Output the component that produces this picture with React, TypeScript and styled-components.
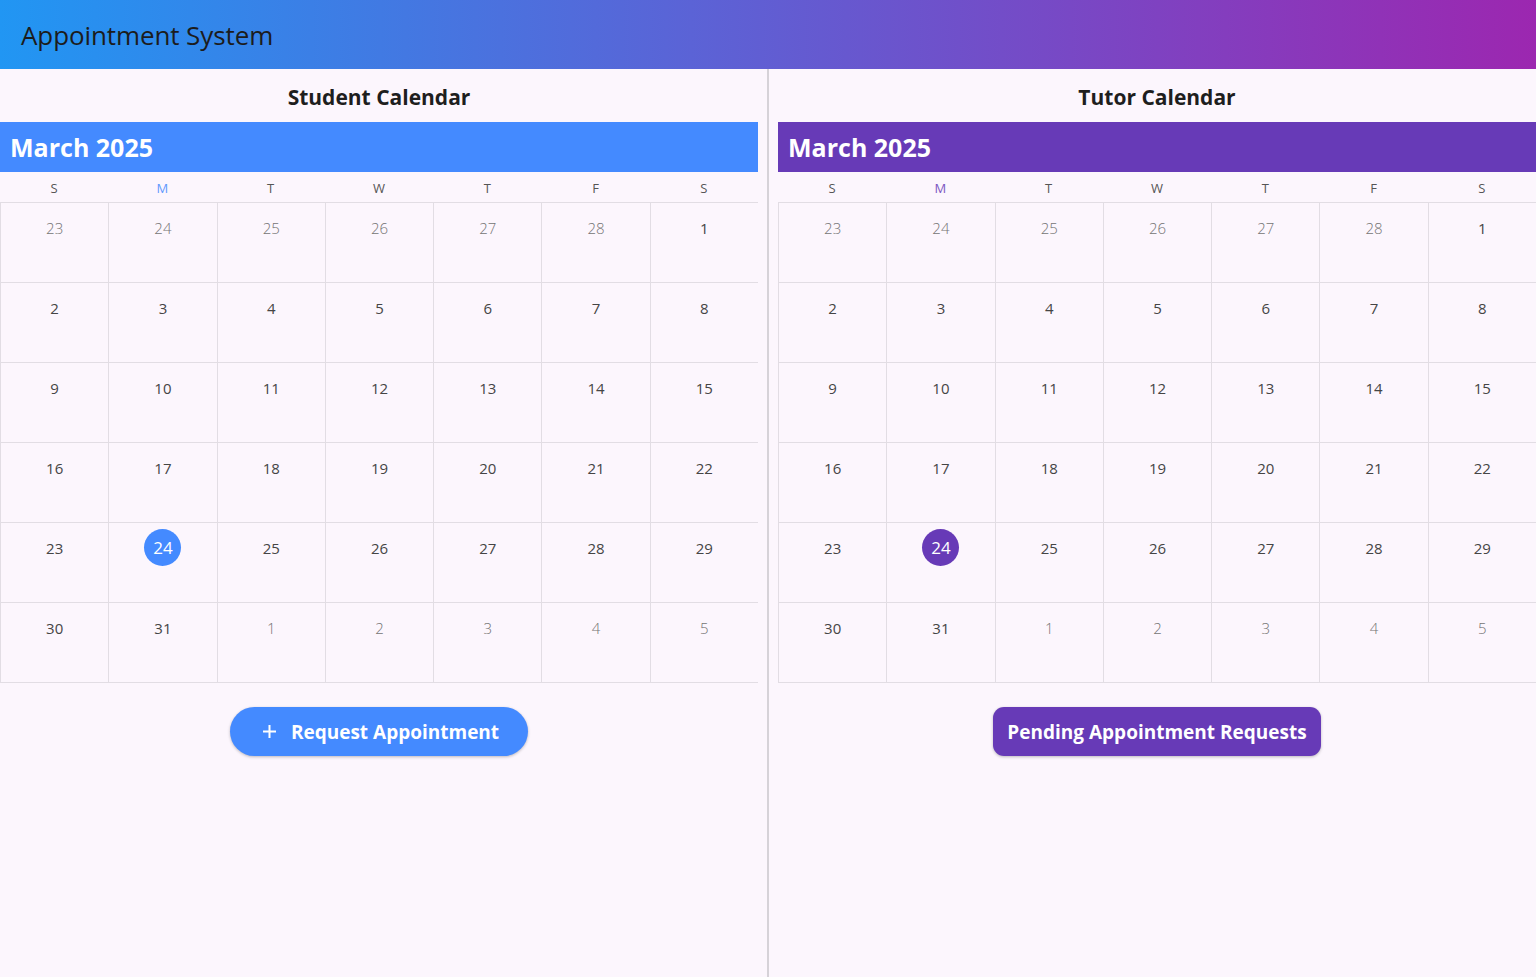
import React from 'react'
import styled, { createGlobalStyle } from 'styled-components'

const GlobalStyle = createGlobalStyle`
  html, body {
    margin: 0;
    padding: 0;
    background: #fcf6fd;
    font-family: "Open Sans", "Noto Sans", sans-serif;
  }
`

const Page = styled.div`
  display: flex;
  flex-direction: column;
  height: 977px;
  overflow: hidden;
`

const TopBar = styled.header`
  height: 69px;
  flex: none;
  display: flex;
  align-items: center;
  padding-left: 21px;
  background: linear-gradient(90deg, #2196f3 0%, #5b63d6 45%, #9c27b0 100%);
`

const AppTitle = styled.h1`
  margin: 0;
  font-size: 26px;
  font-weight: 400;
  color: #1c1c1c;
  letter-spacing: -0.1px;
`

const Columns = styled.main`
  flex: 1;
  display: grid;
  grid-template-columns: 767px 2px 767px;
`

const Divider = styled.div`
  background: #d6d2d8;
`

const Panel = styled.section<{ $side: 'left' | 'right' }>`
  display: flex;
  flex-direction: column;
  padding: ${p => (p.$side === 'left' ? '0 9px 0 0' : '0 0 0 9px')};
`

const PanelTitle = styled.h2`
  margin: 0;
  height: 53px;
  padding-top: 2px;
  box-sizing: border-box;
  display: flex;
  align-items: center;
  justify-content: center;
  font-size: 21px;
  font-weight: 700;
  color: #1e1e1e;
`

const MonthBar = styled.div<{ $accent: string }>`
  height: 50px;
  display: flex;
  align-items: center;
  padding-left: 10px;
  background: ${p => p.$accent};
  color: #fff;
  font-size: 25px;
  font-weight: 700;
`

const WeekRow = styled.div`
  display: grid;
  grid-template-columns: repeat(7, 1fr);
  height: 31px;
  box-sizing: border-box;
  border-bottom: 1px solid #e2dde4;
`

const WeekDay = styled.div<{ $accent?: string }>`
  display: flex;
  align-items: center;
  justify-content: center;
  padding-top: 2px;
  font-size: 13px;
  color: ${p => p.$accent ?? '#555'};
  opacity: ${p => (p.$accent ? 0.85 : 1)};
`

const DayGrid = styled.div`
  display: grid;
  grid-template-columns: repeat(7, 1fr);
  grid-auto-rows: 80px;
`

const DayCell = styled.div`
  display: flex;
  justify-content: center;
  padding-top: 6px;
  border-left: 1px solid #e2dde4;
  border-bottom: 1px solid #e2dde4;
  box-sizing: border-box;
`

const DayNumber = styled.span<{ $muted: boolean; $today?: string }>`
  width: 37px;
  height: 37px;
  border-radius: 50%;
  display: flex;
  align-items: center;
  justify-content: center;
  font-size: ${p => (p.$today ? '17px' : '15px')};
  font-weight: ${p => (p.$muted ? 300 : 400)};
  color: ${p => (p.$today ? '#fff' : p.$muted ? '#747474' : '#454545')};
  background: ${p => p.$today ?? 'transparent'};
`

const Actions = styled.div`
  display: flex;
  justify-content: center;
  padding-top: 24px;
`

const ActionButton = styled.button<{ $accent: string; $pill?: boolean }>`
  height: 49px;
  display: flex;
  align-items: center;
  gap: 14px;
  padding: ${p => (p.$pill ? '0 29px 0 32px' : '0 14px')};
  border: none;
  border-radius: ${p => (p.$pill ? '25px' : '11px')};
  background: ${p => p.$accent};
  color: #fff;
  font-family: inherit;
  font-size: 19px;
  font-weight: 700;
  box-shadow: 0 1px 3px rgba(0, 0, 0, 0.25);
  cursor: pointer;
`

const PlusIcon = () => (
  <svg width="15" height="15" viewBox="0 0 15 15" fill="none" stroke="#fff" strokeWidth="2">
    <path d="M7.5 1v13M1 7.5h13" />
  </svg>
)

const WEEKDAYS = ['S', 'M', 'T', 'W', 'T', 'F', 'S']

// March 2025 with the trailing days of February and leading days of April
const buildDays = () => {
  const days: { n: number; muted: boolean }[] = []
  for (let d = 23; d <= 28; d++) days.push({ n: d, muted: true })
  for (let d = 1; d <= 31; d++) days.push({ n: d, muted: false })
  for (let d = 1; days.length < 42; d++) days.push({ n: d, muted: true })
  return days
}

const DAYS = buildDays()

function Calendar({ accent }: { accent: string }) {
  return (
    <div>
      <MonthBar $accent={accent}>March 2025</MonthBar>
      <WeekRow>
        {WEEKDAYS.map((w, i) => (
          <WeekDay key={i} $accent={i === 1 ? accent : undefined}>
            {w}
          </WeekDay>
        ))}
      </WeekRow>
      <DayGrid>
        {DAYS.map((d, i) => (
          <DayCell key={i}>
            <DayNumber $muted={d.muted} $today={!d.muted && d.n === 24 ? accent : undefined}>
              {d.n}
            </DayNumber>
          </DayCell>
        ))}
      </DayGrid>
    </div>
  )
}

export default function App() {
  return (
    <Page>
      <GlobalStyle />
      <TopBar>
        <AppTitle>Appointment System</AppTitle>
      </TopBar>
      <Columns>
        <Panel $side="left">
          <PanelTitle>Student Calendar</PanelTitle>
          <Calendar accent="#448aff" />
          <Actions>
            <ActionButton $accent="#448aff" $pill>
              <PlusIcon />
              Request Appointment
            </ActionButton>
          </Actions>
        </Panel>
        <Divider />
        <Panel $side="right">
          <PanelTitle>Tutor Calendar</PanelTitle>
          <Calendar accent="#673ab7" />
          <Actions>
            <ActionButton $accent="#673ab7">Pending Appointment Requests</ActionButton>
          </Actions>
        </Panel>
      </Columns>
    </Page>
  )
}
